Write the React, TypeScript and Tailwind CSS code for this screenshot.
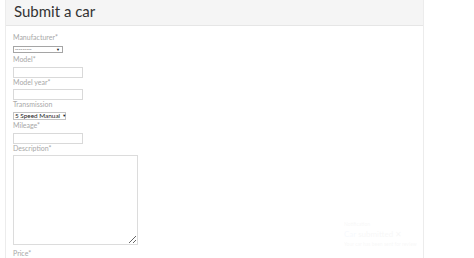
import React from "react";

const FONT = { fontFamily: "Lato, 'Open Sans', sans-serif" };

const Label: React.FC<{ text: string; className?: string }> = ({ text, className = "" }) => (
  <label className={`block h-[9px] whitespace-nowrap text-[7px] leading-[9px] text-[#a8a8a8] ${className}`}>{text}</label>
);

const TextInput: React.FC<{ className?: string }> = ({ className = "" }) => (
  <input
    type="text"
    className={`block h-[11px] w-[70px] border border-[#d9d9d9] bg-white outline-none ${className}`}
  />
);

export default function App() {
  return (
    <div className="relative h-[258px] w-[474px] overflow-hidden bg-white" style={FONT}>
      {/* panel */}
      <div className="ml-[5px] flex h-full w-[419px] flex-col border-x border-[#ececec]">
        <div className="h-[26px] shrink-0 border-b border-[#e6e6e6] bg-[#f5f5f5] pl-[8px]">
          <h1 className="text-[15px] leading-[23px] text-[#333]">Submit a car</h1>
        </div>

        <form className="flex flex-col items-start pl-[7px] pt-[7px]">
          <Label text="Manufacturer*" />
          <div className="mt-[4px] flex h-[7px] w-[50px] items-center justify-between border border-[#a5a5a5] bg-white pl-[1px] pr-[2px] text-[5px] leading-none text-[#444]">
            <span>---------</span>
            <span className="text-[4px] text-[#111]">▼</span>
          </div>

          <Label text="Model*" className="mt-[2px]" />
          <TextInput className="mt-[3px]" />

          <Label text="Model year*" />
          <TextInput className="mt-[2px]" />

          <Label text="Transmission" />
          <div className="mt-[3px] flex h-[8px] w-[53px] shrink-0 items-center justify-between gap-[2px] whitespace-nowrap border border-[#c4c4c4] bg-white pl-[1px] pr-[2px] text-[6.4px] leading-none text-[#222]">
            <span>5 Speed Manual</span>
            <span className="text-[4px] text-[#111]">▼</span>
          </div>

          <Label text="Mileage*" className="mt-[1px]" />
          <TextInput className="mt-[3px]" />

          <Label text="Description*" />
          <textarea className="mt-[2px] block h-[90px] w-[125px] resize border border-[#dcdcdc] bg-white outline-none" />

          <Label text="Price*" className="mt-[4px]" />
        </form>
      </div>

      {/* fading notification toast */}
      <div className="absolute bottom-[10px] right-[4px] w-[126px] opacity-[0.035]">
        <p className="text-[5px] leading-[8px] text-[#333]">Notification</p>
        <p className="text-[8px] leading-[12px] text-[#333]">
          <span className="text-[#1e6fd9]">Car</span> submitted ✕
        </p>
        <p className="text-[5px] leading-[8px] text-[#333]">Your car has been sent for review</p>
      </div>
    </div>
  );
}
